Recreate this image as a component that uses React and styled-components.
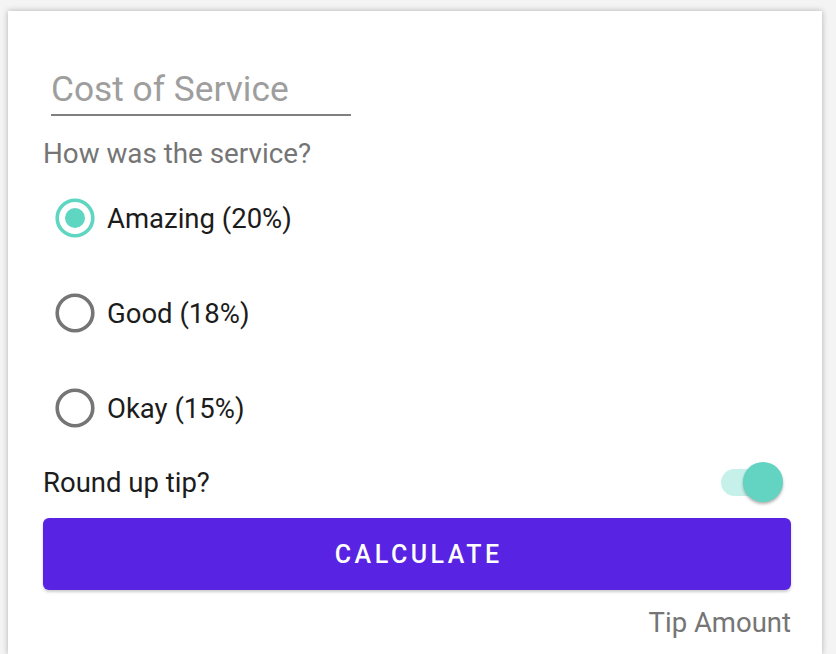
import React, { useState } from 'react'
import styled, { createGlobalStyle } from 'styled-components'

const GlobalStyle = createGlobalStyle`
  html, body {
    margin: 0;
    padding: 0;
    background: #f4f4f4;
    font-family: Roboto, "Noto Sans", Arial, sans-serif;
    overflow: hidden;
  }
`

const options = [
  { id: 'amazing', label: 'Amazing (20%)' },
  { id: 'good', label: 'Good (18%)' },
  { id: 'okay', label: 'Okay (15%)' },
]

function App() {
  const [choice, setChoice] = useState('amazing')
  const [roundUp, setRoundUp] = useState(true)

  return (
    <>
      <GlobalStyle />
      <Card>
        <CostInput placeholder="Cost of Service" />
        <Question>How was the service?</Question>

        <RadioGroup>
          {options.map(opt => (
            <RadioRow key={opt.id} onClick={() => setChoice(opt.id)}>
              <RadioIcon checked={choice === opt.id} />
              <RadioLabel>{opt.label}</RadioLabel>
            </RadioRow>
          ))}
        </RadioGroup>

        <SwitchRow>
          <SwitchLabel>Round up tip?</SwitchLabel>
          <SwitchBox onClick={() => setRoundUp(!roundUp)}>
            <Track $on={roundUp} />
            <Thumb $on={roundUp} />
          </SwitchBox>
        </SwitchRow>

        <CalcButton>Calculate</CalcButton>
        <TipAmount>Tip Amount</TipAmount>
      </Card>
    </>
  )
}

function RadioIcon({ checked }) {
  const color = checked ? '#5fd6c1' : '#757575'
  return (
    <RadioSvg viewBox="0 0 40 40">
      <circle cx="20" cy="20" r="17.8" fill="none" stroke={color} strokeWidth="3.6" />
      {checked && <circle cx="20" cy="20" r="10" fill={color} />}
    </RadioSvg>
  )
}

export default App

const Card = styled.div`
  box-sizing: border-box;
  margin: 11px 14px 0 8px;
  min-height: calc(100vh - 11px);
  background: #fff;
  box-shadow: 0 0 6px rgba(0, 0, 0, 0.28);
  padding: 57px 31px 0 35px;
  display: flex;
  flex-direction: column;
`

const CostInput = styled.input`
  margin-left: 8px;
  width: 300px;
  height: 41px;
  padding: 0 0 5px 0;
  border: none;
  border-bottom: 2px solid #808080;
  outline: none;
  font-family: Roboto, sans-serif;
  font-size: 35.3px;
  color: #212121;
  background: transparent;
  box-sizing: content-box;
  &::placeholder {
    color: #9e9e9e;
  }
`

const Question = styled.div`
  margin-top: 21px;
  font-size: 27.8px;
  line-height: 33px;
  color: #757575;
`

const RadioGroup = styled.div`
  margin-top: 6px;
  display: flex;
  flex-direction: column;
  gap: 11px;
`

const RadioRow = styled.div`
  height: 84px;
  display: flex;
  align-items: center;
  padding-left: 12px;
  cursor: pointer;
`

const RadioSvg = styled.svg`
  width: 40px;
  height: 40px;
  flex-shrink: 0;
`

const RadioLabel = styled.span`
  margin-left: 12px;
  font-size: 27.5px;
  color: #1c1c1c;
`

const SwitchRow = styled.div`
  height: 64px;
  display: flex;
  align-items: center;
  justify-content: space-between;
`

const SwitchLabel = styled.span`
  font-size: 27.5px;
  color: #1c1c1c;
`

const SwitchBox = styled.div`
  position: relative;
  width: 62px;
  height: 40px;
  margin-right: 8px;
  cursor: pointer;
`

const Track = styled.div`
  position: absolute;
  left: 0;
  top: 7px;
  width: 54px;
  height: 27px;
  border-radius: 14px;
  background: ${p => (p.$on ? '#c6f0ea' : '#bdbdbd')};
`

const Thumb = styled.div`
  position: absolute;
  top: 0;
  ${p => (p.$on ? 'right: 0;' : 'left: 0;')}
  width: 40px;
  height: 40px;
  border-radius: 50%;
  background: ${p => (p.$on ? '#62d4c1' : '#fafafa')};
  box-shadow: 0 2px 3px rgba(0, 0, 0, 0.3);
`

const CalcButton = styled.button`
  margin-top: 4px;
  height: 72px;
  border: none;
  border-radius: 6px;
  background: #5823e2;
  color: #fff;
  font-family: Roboto, sans-serif;
  font-weight: 500;
  font-size: 25px;
  letter-spacing: 3.5px;
  text-indent: 3.5px;
  text-transform: uppercase;
  box-shadow: 0 2px 3px rgba(0, 0, 0, 0.2);
  cursor: pointer;
`

const TipAmount = styled.div`
  margin-top: 16px;
  text-align: right;
  font-size: 27.5px;
  line-height: 33px;
  color: #757575;
`
